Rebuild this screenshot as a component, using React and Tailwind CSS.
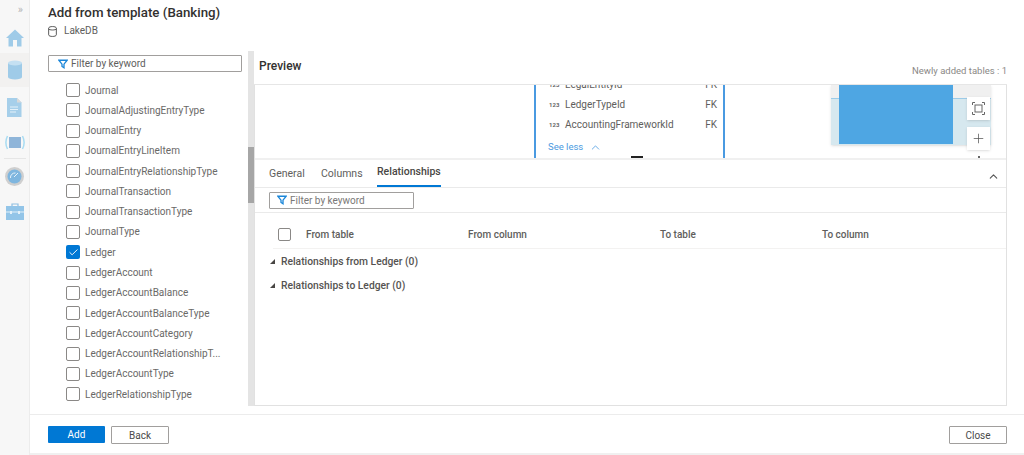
import React from "react";
import { ChevronUp, Plus, Check } from "lucide-react";

const items = ["Journal","JournalAdjustingEntryType","JournalEntry","JournalEntryLineItem","JournalEntryRelationshipType","JournalTransaction","JournalTransactionType","JournalType","Ledger","LedgerAccount","LedgerAccountBalance","LedgerAccountBalanceType","LedgerAccountCategory","LedgerAccountRelationshipT...","LedgerAccountType","LedgerRelationshipType"];

function Funnel() {
  return (
    <svg width="10" height="10" viewBox="0 0 12 12" fill="none" stroke="#1a86d9" strokeWidth="1.6" className="shrink-0">
      <path d="M1 1.500h10L7.200 6.200V10.500L4.800 9V6.200z" />
    </svg>
  );
}

function Rail() {
  return (
    <div className="w-[30px] shrink-0 bg-[#f7f7f7] border-r border-[#ececec] flex flex-col items-center pt-[3px]">
      <div className="self-end pr-[6px] text-[11px] leading-[14px] text-[#b5b5b5]">»</div>
      <svg className="mt-[11px]" width="20" height="20" viewBox="0 0 20 20"><path d="M10 1.500 19 10h-2.500v8.500h-4.500V12H8v6.500H3.500V10H1z" fill="#9fcbe8" /></svg>
      <div className="mt-[5px] w-full h-[34px] bg-[#f2f1f0] flex items-center justify-center">
        <svg width="16" height="20" viewBox="0 0 16 20"><ellipse cx="8" cy="17" rx="7" ry="2.500" fill="#9fcbe8" /><rect x="1" y="3" width="14" height="14" fill="#9fcbe8" /><ellipse cx="8" cy="3" rx="7" ry="2.500" fill="#c4e0f2" /></svg>
      </div>
      <svg className="mt-[11px]" width="15" height="19" viewBox="0 0 15 19"><path d="M0 0h10l4.500 4.500V19H0z" fill="#a6cfea" /><path d="M10 0l4.500 4.500H10z" fill="#d9d9d9" /><path d="M3 9h8M3 11.500h8M3 14h6" stroke="#e4f1f9" strokeWidth="1" /></svg>
      <svg className="mt-[18px]" width="20" height="15" viewBox="0 0 20 15"><rect x="4" y="2" width="12" height="11" fill="#8fb5d9" /><path d="M2.500 1C.5 5 .5 10 2.500 14M17.500 1c2 4 2 9 0 13" stroke="#a8dcf2" strokeWidth="1.500" fill="none" /></svg>
      <div className="mt-[8px] w-[22px] h-px bg-[#e6e6e6]" />
      <svg className="mt-[8px]" width="19" height="19" viewBox="0 0 19 19"><circle cx="9.500" cy="9.500" r="9.500" fill="#cfcfcf" /><circle cx="9.500" cy="9.500" r="7" fill="#7fb6df" /><path d="M9 10l4-4M5.500 11a4.500 4.500 0 0 1 5-5" stroke="#e5f1fa" strokeWidth="1" fill="none" /></svg>
      <svg className="mt-[17px]" width="18" height="17" viewBox="0 0 18 17"><path d="M6 3V1h6v2" stroke="#8fbfe2" strokeWidth="1.200" fill="none" /><rect y="3" width="18" height="14" fill="#93c5e8" /><path d="M0 9h18" stroke="#e4f1f9" strokeWidth="1" /><rect x="4" y="8" width="2" height="3" fill="#e4f1f9" /><rect x="12" y="8" width="2" height="3" fill="#e4f1f9" /></svg>
    </div>
  );
}

function Item({ label }) {
  const on = label === "Ledger";
  return (
    <div className="h-[20.27px] flex items-center pl-[18px] shrink-0">
      {on ? (
        <div className="w-[14px] h-[14px] rounded-[2px] bg-[#0078d4] flex items-center justify-center mr-[5px]"><Check size={11} color="#fff" strokeWidth={2} /></div>
      ) : (
        <div className="w-[14px] h-[14px] rounded-[2px] border border-[#8a8886] mr-[5px]" />
      )}
      <span className="text-[10px] text-[#6a6967] whitespace-nowrap">{label}</span>
    </div>
  );
}

function Row({ name }) {
  return (
    <div className="h-[20px] flex items-center pl-[13px] pr-[6px]">
      <span className="w-[16px] text-[6px] font-bold text-[#666]">123</span>
      <span className="flex-1 text-[10px] text-[#605e5c]">{name}</span>
      <span className="text-[10px] text-[#605e5c]">FK</span>
    </div>
  );
}

function Canvas() {
  return (
    <div className="relative h-[75px] overflow-hidden border-b-2 border-[#f0f0f0] shrink-0">
      <div className="absolute left-[279px] top-[-11px] w-[191px] h-[89px] border-x-2 border-[#4a9ae1] bg-white">
        <Row name="LegalEntityId" />
        <Row name="LedgerTypeId" />
        <Row name="AccountingFrameworkId" />
        <div className="flex items-center pl-[12px] mt-[6px] text-[9.5px] text-[#4a9ae1] gap-[6px]">See less <ChevronUp size={13} strokeWidth={1.5} /></div>
      </div>
      <div className="absolute left-[376px] bottom-0 w-[12px] h-[2px] bg-[#222]" />
      <div className="absolute left-[576px] top-0 w-[160px] h-[60px] bg-[#f0f0f0] shadow-sm">
        <div className="absolute left-0 right-0 top-[13px] bottom-0 bg-[#d6e8ef] border-t border-[#9ccbe8]" />
        <div className="absolute left-[8px] top-0 w-[114px] h-[59px] bg-[#4ea6e3]" />
      </div>
      <div className="absolute left-[712px] top-[12px] w-[23px] h-[23px] bg-white shadow-sm flex items-center justify-center">
        <svg width="13" height="13" viewBox="0 0 13 13" fill="none" stroke="#666" strokeWidth="1"><rect x="3" y="3" width="7" height="7" /><path d="M.5 3V.5H3M10 .5h2.500V3M12.500 10v2.500H10M3 12.500H.5V10" /></svg>
      </div>
      <div className="absolute left-[712px] top-[42px] w-[23px] h-[23px] bg-white shadow-sm flex items-center justify-center"><Plus size={15} color="#555" strokeWidth={1.2} /></div>
      <div className="absolute left-[723px] bottom-0 w-[2px] h-[2px] bg-[#666]" />
    </div>
  );
}

function Cols() {
  return (
    <div className="h-[36px] pt-[7px] flex items-center border-b border-[#f3f2f1] ml-[18px] shrink-0 text-[10px] font-medium text-[#605e5c]">
      <div className="w-[13px] h-[13px] rounded-[2px] border border-[#8a8886] ml-[5px] mr-[15px] shrink-0" />
      <span className="w-[162px]">From table</span>
      <span className="w-[192px]">From column</span>
      <span className="w-[162px]">To table</span>
      <span>To column</span>
    </div>
  );
}

function Group({ label }) {
  return (
    <div className="h-[24.5px] flex items-center pl-[15px] text-[10.3px] text-[#555351] font-medium">
      <span className="w-0 h-0 border-l-[5px] border-l-transparent border-b-[5px] border-b-[#484644] mr-[6px]" />
      {label}
    </div>
  );
}

export default function App() {
  return (
    <div className="w-[1024px] h-[455px] overflow-hidden flex bg-white font-['Roboto',sans-serif]">
      <Rail />
      <div className="flex-1 min-w-0 flex flex-col">
        <div className="h-[41px] pl-[18px] pt-[3px] shrink-0">
          <div className="text-[13.3px] leading-[20px] font-medium text-[#323130]">Add from template (Banking)</div>
          <div className="flex items-center text-[10px] leading-[14px] text-[#605e5c] mt-[1px]">
            <svg width="9" height="11" viewBox="0 0 8 10" fill="none" stroke="#444" strokeWidth="0.8" className="mr-[7px]"><path d="M.5 2v6c0 2 7 2 7 0V2c0-2-7-2-7 0zM.5 2.500c0 1.500 7 1.500 7 0" /></svg>
            LakeDB
          </div>
        </div>
        <div className="flex-1 min-h-0 flex pr-[17px]">
          <div className="w-[218px] shrink-0 pl-[18px] pt-[14px]">
            <div className="w-[194px] h-[17px] border border-[#a19f9d] rounded-[1px] flex items-center pl-[9px] gap-[3px] text-[10px] text-[#605e5c]"><Funnel />Filter by keyword</div>
            <div className="mt-[8px] flex flex-col">
              {items.map((i) => <Item key={i} label={i} />)}
            </div>
          </div>
          <div className="w-[6px] shrink-0 bg-[#e4e4e4] relative mt-[10px] mb-[8px]">
            <div className="absolute left-0 right-0 top-[96px] h-[56px] bg-[#a6a6a6]" />
          </div>
          <div className="flex-1 min-w-0 flex flex-col mb-[8px]">
            <div className="h-[44px] shrink-0 flex items-center justify-between border-b border-[#e6e6e6] pl-[5px]">
              <span className="text-[12px] font-medium text-[#323130] mt-[6px]">Preview</span>
              <span className="text-[9.5px] text-[#8a8886] mt-[17px]">Newly added tables : 1</span>
            </div>
            <div className="flex-1 min-h-0 flex flex-col border-l border-r border-b border-[#e1e1e1]">
              <Canvas />
              <div className="h-[28px] shrink-0 flex items-end border-b border-[#eaeaea] pl-[14px] text-[10.5px] text-[#605e5c] relative">
                <span className="w-[52px] h-[27px] flex items-center">General</span>
                <span className="w-[56px] h-[27px] flex items-center">Columns</span>
                <span className="h-[28px] flex items-center border-b-2 border-[#0078d4] font-medium text-[#484644]">Relationships</span>
                <ChevronUp size={13} color="#555" className="absolute right-[6px] top-[10px]" />
              </div>
              <div className="h-[25px] shrink-0 flex items-center border-b border-[#eaeaea] pl-[14px]">
                <div className="w-[145px] h-[17px] border border-[#a19f9d] rounded-[1px] flex items-center pl-[7px] gap-[3px] text-[10px] text-[#7a7876]"><Funnel />Filter by keyword</div>
              </div>
              <Cols />
              <div className="pt-0">
                <Group label="Relationships from Ledger (0)" />
                <Group label="Relationships to Ledger (0)" />
              </div>
            </div>
          </div>
        </div>
        <div className="h-[39px] shrink-0 border-t border-[#ececec] flex items-center justify-between pl-[18px] pr-[17px] pt-[2px]">
          <div className="flex gap-[6px]">
            <button className="w-[57px] h-[17px] bg-[#0078d4] rounded-[1px] text-[10px] text-white flex items-center justify-center">Add</button>
            <button className="w-[58px] h-[18px] border border-[#a19f9d] rounded-[1px] text-[10px] text-[#4a4a4a] flex items-center justify-center">Back</button>
          </div>
          <button className="w-[58px] h-[18px] border border-[#a19f9d] rounded-[1px] text-[10px] text-[#4a4a4a] flex items-center justify-center">Close</button>
        </div>
        <div className="h-[2px] shrink-0 bg-[#f0f0f0]" />
      </div>
    </div>
  );
}
